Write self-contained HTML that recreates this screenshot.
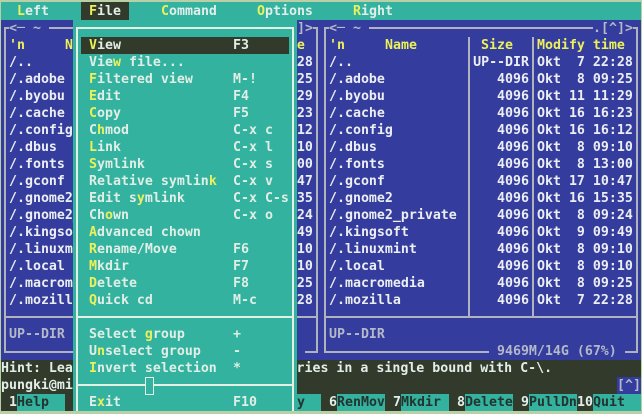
<!DOCTYPE html>
<html><head><meta charset="utf-8"><style>
*{margin:0;padding:0;box-sizing:border-box}
html,body{width:642px;height:414px;overflow:hidden;background:#b9cfa6}
body{position:relative;font-family:"DejaVu Sans Mono","Liberation Mono",monospace;font-size:13.28px;font-weight:bold;line-height:17px}
.a{position:absolute;white-space:pre}
.y{color:#ecf05a}
.lt{color:#e2eee8}
.g{color:#b4b8c8}
.teal{background:#33b29f}
.blue{background:#343d9d}
.dark{background:#323a2b}
.panel{position:absolute;top:20px;width:320px;height:340px;background:#343d9d;color:#eceef2}
.panel .box{position:absolute;left:3px;top:7px;width:314px;height:326px;border:2px solid #b0b3be}
.panel .vs{position:absolute;top:17px;width:2px;height:281px;background:#b0b3be}
.panel .hs{position:absolute;left:3px;top:296px;width:314px;height:2px;background:#b0b3be}
.r{position:absolute;left:0;width:320px;height:17px}
.r > span{position:absolute;white-space:pre}
.n{left:8px}
.s{left:152px;width:56px;text-align:right}
.d{left:216px}
.menu{position:absolute;left:73px;top:20px;width:224px;height:391px;background:#33b29f;overflow:hidden;color:#e0eee6}
.menu .box{position:absolute;left:3px;top:7px;width:218px;height:384px;border:2px solid #e4f0e4;border-bottom:none}
.menu .sep{position:absolute;left:3px;width:218px;height:2px;background:#e4f0e4}
.mi{position:absolute;left:0;width:224px;height:17px}
.mi > span{position:absolute;white-space:pre}
.mi > .l{left:16px}.mi > .k{left:160px}
</style></head><body>
<div class="a teal" style="left:1px;top:2px;width:640px;height:18px"></div>
<div class="a dark" style="left:81px;top:2px;width:48px;height:18px"></div>
<div class="a lt" style="left:17px;top:3px"><span class="y">L</span>eft</div>
<div class="a lt" style="left:89px;top:3px"><span class="y">F</span>ile</div>
<div class="a lt" style="left:161px;top:3px"><span class="y">C</span>ommand</div>
<div class="a lt" style="left:257px;top:3px"><span class="y">O</span>ptions</div>
<div class="a lt" style="left:353px;top:3px"><span class="y">R</span>ight</div>

<div class="a dark" style="left:1px;top:360px;width:640px;height:51px"></div>

<div class="panel" style="left:1px">
<div class="box"></div><div class="vs" style="left:147px"></div><div class="vs" style="left:211px"></div><div class="hs"></div>
<div class="r" style="top:0"><span class="g blue" style="left:8px">&lt;─ ~ </span><span class="g blue" style="left:272px">.[^]&gt;</span></div>
<div class="r y" style="top:17px"><span class="n">'n</span><span style="left:64px">Name</span><span style="left:160px">Size</span><span style="left:216px">Modify time</span></div>
<div class="r" style="top:34px"><span class="n">/..</span><span class="s">UP--DIR</span><span class="d">Okt  7 22:28</span></div>
<div class="r" style="top:51px"><span class="n">/.adobe</span><span class="s">4096</span><span class="d">Okt  8 09:25</span></div>
<div class="r" style="top:68px"><span class="n">/.byobu</span><span class="s">4096</span><span class="d">Okt 11 11:29</span></div>
<div class="r" style="top:85px"><span class="n">/.cache</span><span class="s">4096</span><span class="d">Okt 16 16:23</span></div>
<div class="r" style="top:102px"><span class="n">/.config</span><span class="s">4096</span><span class="d">Okt 16 16:12</span></div>
<div class="r" style="top:119px"><span class="n">/.dbus</span><span class="s">4096</span><span class="d">Okt  8 09:10</span></div>
<div class="r" style="top:136px"><span class="n">/.fonts</span><span class="s">4096</span><span class="d">Okt  8 13:00</span></div>
<div class="r" style="top:153px"><span class="n">/.gconf</span><span class="s">4096</span><span class="d">Okt 17 10:47</span></div>
<div class="r" style="top:170px"><span class="n">/.gnome2</span><span class="s">4096</span><span class="d">Okt 16 15:35</span></div>
<div class="r" style="top:187px"><span class="n">/.gnome2_private</span><span class="s">4096</span><span class="d">Okt  8 09:24</span></div>
<div class="r" style="top:204px"><span class="n">/.kingsoft</span><span class="s">4096</span><span class="d">Okt  9 09:49</span></div>
<div class="r" style="top:221px"><span class="n">/.linuxmint</span><span class="s">4096</span><span class="d">Okt  8 09:10</span></div>
<div class="r" style="top:238px"><span class="n">/.local</span><span class="s">4096</span><span class="d">Okt  8 09:10</span></div>
<div class="r" style="top:255px"><span class="n">/.macromedia</span><span class="s">4096</span><span class="d">Okt  8 09:25</span></div>
<div class="r" style="top:272px"><span class="n">/.mozilla</span><span class="s">4096</span><span class="d">Okt  7 22:28</span></div>
<div class="r g" style="top:306px"><span class="n">UP--DIR</span></div>
<div class="r g" style="top:323px"><span class="blue" style="left:168px"> 9469M/14G (67%) </span></div>
</div>

<div class="panel" style="left:321px">
<div class="box"></div><div class="vs" style="left:147px"></div><div class="vs" style="left:211px"></div><div class="hs"></div>
<div class="r" style="top:0"><span class="g blue" style="left:8px">&lt;─ ~ </span><span class="g blue" style="left:272px">.[^]&gt;</span></div>
<div class="r y" style="top:17px"><span class="n">'n</span><span style="left:64px">Name</span><span style="left:160px">Size</span><span style="left:216px">Modify time</span></div>
<div class="r" style="top:34px"><span class="n">/..</span><span class="s">UP--DIR</span><span class="d">Okt  7 22:28</span></div>
<div class="r" style="top:51px"><span class="n">/.adobe</span><span class="s">4096</span><span class="d">Okt  8 09:25</span></div>
<div class="r" style="top:68px"><span class="n">/.byobu</span><span class="s">4096</span><span class="d">Okt 11 11:29</span></div>
<div class="r" style="top:85px"><span class="n">/.cache</span><span class="s">4096</span><span class="d">Okt 16 16:23</span></div>
<div class="r" style="top:102px"><span class="n">/.config</span><span class="s">4096</span><span class="d">Okt 16 16:12</span></div>
<div class="r" style="top:119px"><span class="n">/.dbus</span><span class="s">4096</span><span class="d">Okt  8 09:10</span></div>
<div class="r" style="top:136px"><span class="n">/.fonts</span><span class="s">4096</span><span class="d">Okt  8 13:00</span></div>
<div class="r" style="top:153px"><span class="n">/.gconf</span><span class="s">4096</span><span class="d">Okt 17 10:47</span></div>
<div class="r" style="top:170px"><span class="n">/.gnome2</span><span class="s">4096</span><span class="d">Okt 16 15:35</span></div>
<div class="r" style="top:187px"><span class="n">/.gnome2_private</span><span class="s">4096</span><span class="d">Okt  8 09:24</span></div>
<div class="r" style="top:204px"><span class="n">/.kingsoft</span><span class="s">4096</span><span class="d">Okt  9 09:49</span></div>
<div class="r" style="top:221px"><span class="n">/.linuxmint</span><span class="s">4096</span><span class="d">Okt  8 09:10</span></div>
<div class="r" style="top:238px"><span class="n">/.local</span><span class="s">4096</span><span class="d">Okt  8 09:10</span></div>
<div class="r" style="top:255px"><span class="n">/.macromedia</span><span class="s">4096</span><span class="d">Okt  8 09:25</span></div>
<div class="r" style="top:272px"><span class="n">/.mozilla</span><span class="s">4096</span><span class="d">Okt  7 22:28</span></div>
<div class="r g" style="top:306px"><span class="n">UP--DIR</span></div>
<div class="r g" style="top:323px"><span class="blue" style="left:168px"> 9469M/14G (67%) </span></div>
</div>

<div class="a lt" style="left:1px;top:360px">Hint: Leap to frequently used directories in a single bound with C-\.</div>
<div class="a lt" style="left:1px;top:377px">pungki@mint ~ $</div>
<div class="a blue g" style="left:617px;top:377px;width:24px;height:17px">[^]</div>

<div class="a lt" style="left:9px;top:394px">1</div><div class="a teal" style="left:17px;top:394px;width:48px;height:17px;color:#25332f">Help</div>
<div class="a lt" style="left:73px;top:394px">2</div><div class="a teal" style="left:81px;top:394px;width:48px;height:17px;color:#25332f">Menu</div>
<div class="a lt" style="left:137px;top:394px">3</div><div class="a teal" style="left:145px;top:394px;width:48px;height:17px;color:#25332f">View</div>
<div class="a lt" style="left:201px;top:394px">4</div><div class="a teal" style="left:209px;top:394px;width:48px;height:17px;color:#25332f">Edit</div>
<div class="a lt" style="left:265px;top:394px">5</div><div class="a teal" style="left:273px;top:394px;width:48px;height:17px;color:#25332f">Copy</div>
<div class="a lt" style="left:329px;top:394px">6</div><div class="a teal" style="left:337px;top:394px;width:48px;height:17px;color:#25332f">RenMov</div>
<div class="a lt" style="left:393px;top:394px">7</div><div class="a teal" style="left:401px;top:394px;width:48px;height:17px;color:#25332f">Mkdir</div>
<div class="a lt" style="left:457px;top:394px">8</div><div class="a teal" style="left:465px;top:394px;width:48px;height:17px;color:#25332f">Delete</div>
<div class="a lt" style="left:521px;top:394px">9</div><div class="a teal" style="left:529px;top:394px;width:48px;height:17px;color:#25332f">PullDn</div>
<div class="a lt" style="left:577px;top:394px">10</div><div class="a teal" style="left:593px;top:394px;width:48px;height:17px;color:#25332f">Quit</div>

<div class="menu">
<div class="box"></div>
<div class="sep" style="top:296px"></div>
<div class="sep" style="top:364px"></div>
<div class="a dark" style="left:8px;top:17px;width:208px;height:17px"></div>
<div class="mi" style="top:17px"><span class="l"><span class="y">V</span>iew</span><span class="k">F3</span></div>
<div class="mi" style="top:34px"><span class="l">Vie<span class="y">w</span> file...</span></div>
<div class="mi" style="top:51px"><span class="l"><span class="y">F</span>iltered view</span><span class="k">M-!</span></div>
<div class="mi" style="top:68px"><span class="l"><span class="y">E</span>dit</span><span class="k">F4</span></div>
<div class="mi" style="top:85px"><span class="l"><span class="y">C</span>opy</span><span class="k">F5</span></div>
<div class="mi" style="top:102px"><span class="l">C<span class="y">h</span>mod</span><span class="k">C-x c</span></div>
<div class="mi" style="top:119px"><span class="l"><span class="y">L</span>ink</span><span class="k">C-x l</span></div>
<div class="mi" style="top:136px"><span class="l"><span class="y">S</span>ymlink</span><span class="k">C-x s</span></div>
<div class="mi" style="top:153px"><span class="l">Relative symlin<span class="y">k</span></span><span class="k">C-x v</span></div>
<div class="mi" style="top:170px"><span class="l">Edit s<span class="y">y</span>mlink</span><span class="k">C-x C-s</span></div>
<div class="mi" style="top:187px"><span class="l">Ch<span class="y">o</span>wn</span><span class="k">C-x o</span></div>
<div class="mi" style="top:204px"><span class="l"><span class="y">A</span>dvanced chown</span></div>
<div class="mi" style="top:221px"><span class="l"><span class="y">R</span>ename/Move</span><span class="k">F6</span></div>
<div class="mi" style="top:238px"><span class="l"><span class="y">M</span>kdir</span><span class="k">F7</span></div>
<div class="mi" style="top:255px"><span class="l"><span class="y">D</span>elete</span><span class="k">F8</span></div>
<div class="mi" style="top:272px"><span class="l"><span class="y">Q</span>uick cd</span><span class="k">M-c</span></div>
<div class="mi" style="top:306px"><span class="l">Select <span class="y">g</span>roup</span><span class="k">+</span></div>
<div class="mi" style="top:323px"><span class="l">U<span class="y">n</span>select group</span><span class="k">-</span></div>
<div class="mi" style="top:340px"><span class="l"><span class="y">I</span>nvert selection</span><span class="k">*</span></div>
<div class="mi" style="top:374px"><span class="l">E<span class="y">x</span>it</span><span class="k">F10</span></div>
<div class="a" style="left:72px;top:357px;width:9px;height:18px;border:1px solid #e4f0e4;background:#33b29f"></div>
</div>
</body></html>
